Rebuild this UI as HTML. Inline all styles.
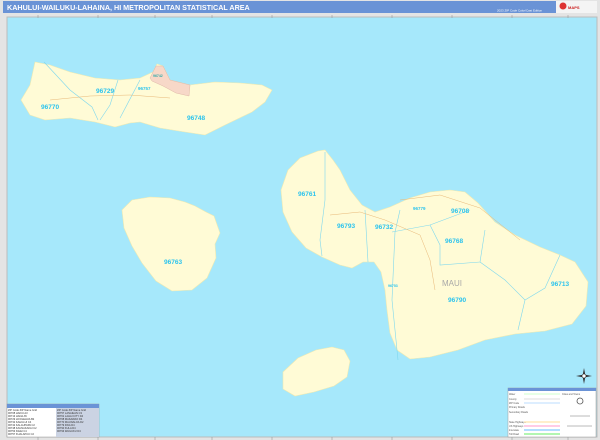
<!DOCTYPE html>
<html><head><meta charset="utf-8"><style>
html,body{margin:0;padding:0;width:600px;height:440px;overflow:hidden;background:#d9d9d9;font-family:"Liberation Sans",sans-serif}
</style></head><body>
<svg width="600" height="440" xmlns="http://www.w3.org/2000/svg" style="position:absolute;left:0;top:0">
<rect x="0" y="0" width="600" height="440" fill="#e4e4e4"/>
<rect x="3" y="1" width="594" height="12" fill="#6a93d6"/>
<text x="7" y="10" font-size="7.2" font-weight="bold" fill="#fff" font-family="Liberation Sans">KAHULUI-WAILUKU-LAHAINA, HI METROPOLITAN STATISTICAL AREA</text>
<text x="497" y="11.5" font-size="3" fill="#fff">2023 ZIP Code Color/Cast Edition</text>
<rect x="556" y="1" width="41" height="12" fill="#f4f4f4"/>
<circle cx="563" cy="6" r="3.5" fill="#d33"/>
<text x="568" y="9" font-size="4" fill="#c22" font-weight="bold">MAPS</text>
<rect x="7" y="17" width="590" height="420" fill="#a6e8fb" stroke="#bbb" stroke-width="1"/>
<g stroke="#999" stroke-width="0.6">
<line x1="38" y1="15" x2="38" y2="18"/><line x1="98" y1="15" x2="98" y2="18"/><line x1="155" y1="15" x2="155" y2="18"/><line x1="212" y1="15" x2="212" y2="18"/><line x1="272" y1="15" x2="272" y2="18"/><line x1="332" y1="15" x2="332" y2="18"/><line x1="392" y1="15" x2="392" y2="18"/><line x1="452" y1="15" x2="452" y2="18"/><line x1="512" y1="15" x2="512" y2="18"/><line x1="568" y1="15" x2="568" y2="18"/>
<line x1="38" y1="437" x2="38" y2="440"/><line x1="98" y1="437" x2="98" y2="440"/><line x1="155" y1="437" x2="155" y2="440"/><line x1="212" y1="437" x2="212" y2="440"/><line x1="272" y1="437" x2="272" y2="440"/><line x1="332" y1="437" x2="332" y2="440"/><line x1="392" y1="437" x2="392" y2="440"/><line x1="452" y1="437" x2="452" y2="440"/><line x1="512" y1="437" x2="512" y2="440"/><line x1="568" y1="437" x2="568" y2="440"/>
</g>
<g fill="#fffbd6" stroke="#f0eab0" stroke-width="0.6">
<polygon points="21,100 30,85 35,62 50,65 70,72 95,78 120,80 140,78 153,72 157,64 163,66 170,80 190,85 215,82 240,83 262,85 272,90 265,102 252,112 225,125 205,135 185,132 160,128 140,122 130,123 115,127 95,122 70,118 45,120 30,115"/>
<polygon points="122,210 132,200 150,197 170,198 185,202 195,206 206,212 214,216 220,233 215,244 216,258 207,278 192,290 172,291 156,281 142,263 132,246 124,228"/>
<polygon points="283,372 298,358 316,350 332,347 344,350 350,361 347,377 334,386 314,392 295,396 283,389"/>
<polygon points="281,190 288,170 300,158 318,151 325,150 333,160 340,170 350,190 362,205 375,212 390,207 410,198 430,192 450,190 465,192 478,203 495,222 515,235 540,247 560,255 575,262 588,282 586,306 572,324 545,331 515,334 485,340 458,350 430,357 410,359 397,350 390,333 387,310 385,290 381,272 374,262 363,262 352,268 340,265 322,257 306,248 292,232 283,212"/>
</g>
<polygon points="150,78 156,66 163,66 170,80 190,85 189,96 176,93 163,86 152,81" fill="#f7d8c8" stroke="#e0b8a8" stroke-width="0.5"/>
<g fill="none" stroke="#7fd8ee" stroke-width="0.6">
<path d="M44,62 L70,90 L92,107 L98,120"/>
<path d="M118,80 L110,105 L100,120"/>
<path d="M140,80 L120,118"/>
<path d="M325,152 L325,200 L320,240 L322,256"/>
<path d="M365,210 L368,262"/>
<path d="M400,210 L395,232 L392,300 L398,360"/>
<path d="M392,232 L430,225 L470,210"/>
<path d="M430,225 L440,245 L440,265 L480,262 L485,230"/>
<path d="M480,262 L505,280 L525,300 L545,288 L560,255"/>
<path d="M525,300 L518,330"/>
</g>
<g fill="none" stroke="#e8b878" stroke-width="0.5">
<path d="M330,215 L360,212 L385,220 L420,235 L430,260 L435,290"/>
<path d="M50,100 L90,96 L130,95 L170,98"/>
<path d="M400,200 L440,195 L480,208 L520,240"/>
</g>
<g font-size="6.5" font-weight="bold" fill="#2bc3ee" font-family="Liberation Sans">
<text x="96" y="93">96729</text>
<text x="138" y="90" font-size="4.5">96757</text>
<text x="41" y="109">96770</text>
<text x="187" y="120">96748</text>
<text x="298" y="196">96761</text>
<text x="337" y="228">96793</text>
<text x="375" y="229">96732</text>
<text x="413" y="210" font-size="4.5">96779</text>
<text x="451" y="213">96708</text>
<text x="445" y="243">96768</text>
<text x="551" y="286">96713</text>
<text x="448" y="302">96790</text>
<text x="164" y="264">96763</text>
<text x="388" y="287" font-size="3.5">96753</text>
<text x="153" y="77" font-size="3.5" fill="#3aa">96742</text>
</g>
<text x="442" y="286" font-size="8" fill="#a8a8a8" font-family="Liberation Sans">MAUI</text>
<g transform="translate(584,376)"><path d="M0,-8 L1.5,0 L0,8 L-1.5,0Z M-8,0 L0,-1.5 L8,0 L0,1.5Z" fill="#333"/><circle r="2" fill="#fff" stroke="#333" stroke-width="0.6"/></g>
<rect x="7" y="404" width="92" height="33" fill="#fff" stroke="#999" stroke-width="0.5"/>
<rect x="7" y="404" width="92" height="4" fill="#6a93d6"/>
<rect x="56" y="408" width="43" height="29" fill="#cbd3e3"/>
<g font-size="2.6" fill="#333">
<text x="8" y="411">ZIP Code   ZIP Name   Grid</text><text x="57" y="411">ZIP Code   ZIP Name   Grid</text>
<text x="8" y="414">96708  HAIKU  A3</text><text x="57" y="414">96757  LANAIHAN  C3</text>
<text x="8" y="417">96713  HANA  A5</text><text x="57" y="417">96761  LAHAI CITY  D4</text>
<text x="8" y="420">96729  HOOLEHUA  B2</text><text x="57" y="420">96768  MAKAWAO  D4</text>
<text x="8" y="423">96732  KAHULUI  C4</text><text x="57" y="423">96770  MAUNALOA  D2</text>
<text x="8" y="426">96742  KALAUPAPA  C2</text><text x="57" y="426">96779  PAIA  D4</text>
<text x="8" y="429">96748  KAUNAKAKAI  C2</text><text x="57" y="429">96790  KULA  D4</text>
<text x="8" y="432">96753  KIHEI  C4</text><text x="57" y="432">96793  WAILUKU  D4</text>
<text x="8" y="435">96757  KUALAPUU  C2</text>
</g>
<rect x="508" y="388" width="88" height="49" fill="#fff" stroke="#999" stroke-width="0.5"/>
<rect x="508" y="388" width="88" height="3" fill="#6a93d6"/>
<g font-size="2.4" fill="#555">
<text x="509" y="395">Water</text><text x="509" y="400">County</text><text x="509" y="404">ZIP Code</text><text x="509" y="408">Primary Roads</text><text x="509" y="413">Secondary Roads</text><text x="509" y="423">State Highways</text><text x="509" y="427">US Highways</text><text x="509" y="431">Interstate</text><text x="509" y="435">Toll Road</text>
<text x="562" y="395">Cities and Towns</text>
</g>
<g stroke-width="1">
<line x1="524" y1="394" x2="560" y2="394" stroke="#cfc"/>
<line x1="524" y1="399" x2="560" y2="399" stroke="#ddd"/>
<line x1="524" y1="403" x2="560" y2="403" stroke="#bdf"/>
<line x1="524" y1="422" x2="560" y2="422" stroke="#fd9"/>
<line x1="524" y1="426" x2="560" y2="426" stroke="#f9c"/>
<line x1="524" y1="430" x2="560" y2="430" stroke="#6bf"/>
<line x1="524" y1="434" x2="560" y2="434" stroke="#6e6"/>
<line x1="570" y1="416" x2="590" y2="416" stroke="#777" stroke-width="0.5"/>
<line x1="567" y1="426" x2="592" y2="426" stroke="#777" stroke-width="0.5"/>
</g>
<circle cx="580" cy="401" r="3" fill="none" stroke="#555" stroke-width="0.8"/>
</svg>
</body></html>
